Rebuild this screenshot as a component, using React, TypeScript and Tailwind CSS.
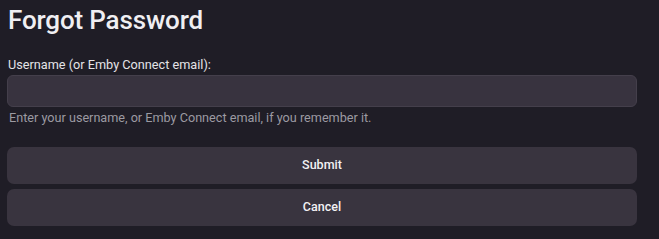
export default function App() {
  return (
    <div className="min-h-[239px] w-full bg-[#1f1d26] pl-[7px] pr-[22px] pt-[5px] font-['Roboto',sans-serif] text-white">
      <h1 className="pl-px text-[26px] leading-[30px] font-medium tracking-[-0.15px] text-[#f0eff2]">Forgot Password</h1>
      <form onSubmit={(e) => e.preventDefault()}>
        <label htmlFor="user" className="mt-[22px] block pl-px text-[12.7px] leading-[16px] text-[#e4e3e7]">
          Username (or Emby Connect email):
        </label>
        <input
          id="user"
          type="text"
          className="mt-[2px] block h-[32px] w-full rounded-[6px] border border-[#443f4b] bg-[#38333f] px-2 text-[13px] text-white outline-none"
        />
        <div className="mt-[3px] pl-[2px] text-[12.65px] leading-[16px] text-[#9c9aa2]">
          Enter your username, or Emby Connect email, if you remember it.
        </div>
        <div className="mt-[21px] flex flex-col gap-[5px]">
          <button type="submit" className="h-[37px] w-full rounded-[7px] bg-[#39343f] text-[12.5px] font-medium text-[#f2f1f4]">
            Submit
          </button>
          <button type="button" className="h-[37px] w-full rounded-[7px] bg-[#39343f] text-[12.5px] font-medium text-[#f2f1f4]">
            Cancel
          </button>
        </div>
      </form>
    </div>
  );
}
